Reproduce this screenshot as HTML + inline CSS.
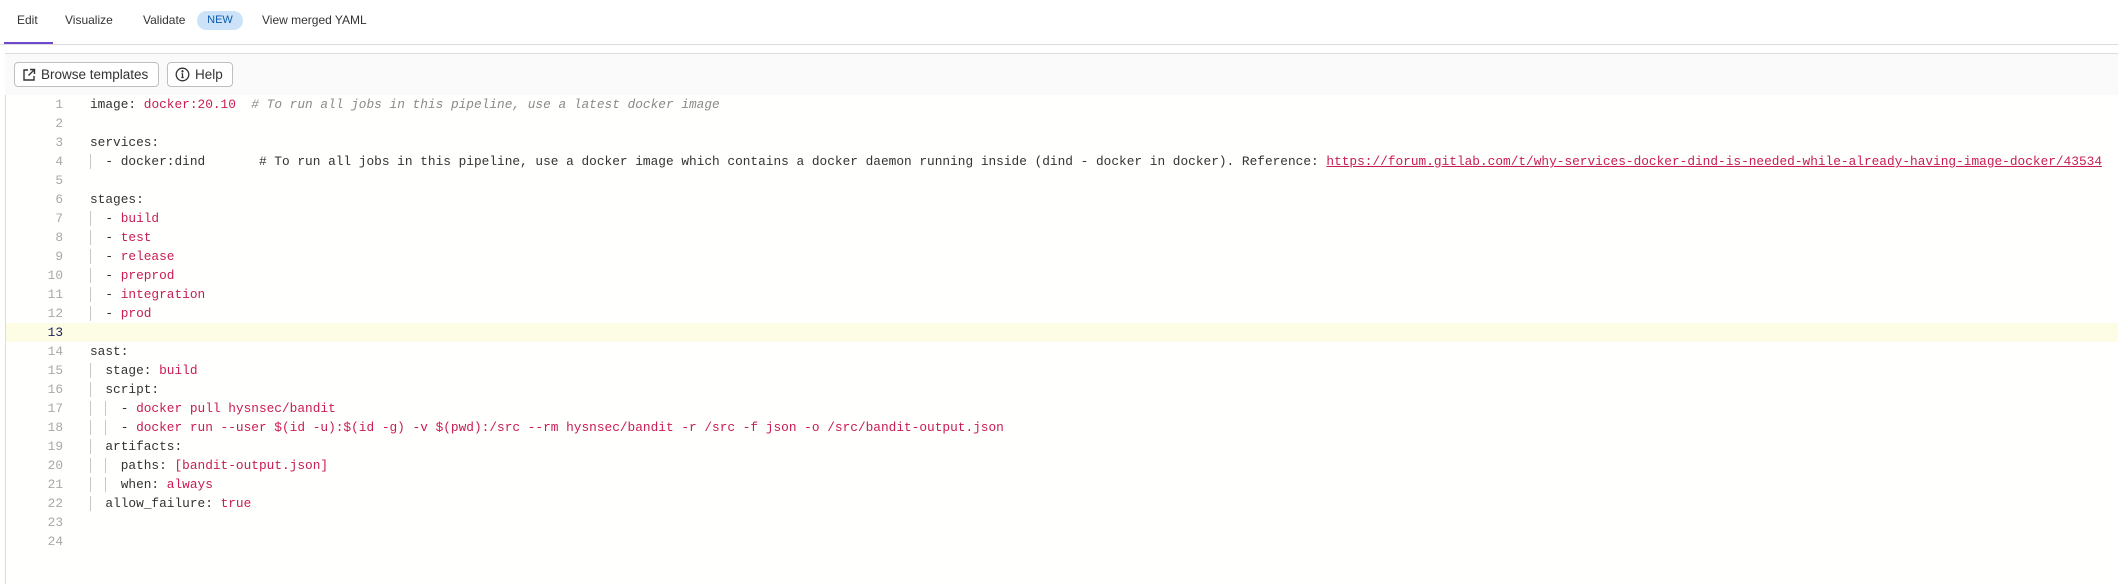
<!DOCTYPE html>
<html><head><meta charset="utf-8"><style>
body{margin:0;width:2118px;height:584px;background:#fff;overflow:hidden;font-family:"Liberation Sans",sans-serif;}
.tabs{position:absolute;left:0;top:0;width:2118px;height:44px;border-bottom:1px solid #dcdcde;}
.tab{position:absolute;top:13px;font-size:12px;color:#333;}
.ul{position:absolute;left:4px;top:42px;width:49px;height:2px;background:#6e49cb;}
.new{position:absolute;left:197px;top:11px;width:46px;height:19px;border-radius:10px;background:#cbe2f9;color:#0b5cad;font-size:11px;line-height:19px;text-align:center;}
.tb{position:absolute;left:5px;top:53px;width:2113px;height:41px;background:#fafafa;border-top:1px solid #dcdcde;border-bottom:1px solid #e5e5e5;}
.btn{position:absolute;top:8px;height:23px;border:1px solid #bfbfc3;border-radius:4px;background:#fff;font-size:13.5px;color:#333;line-height:23px;box-sizing:content-box;}
.ed{position:absolute;left:5px;top:95px;width:2113px;height:489px;background:#fffffd;border-left:1px solid #dcdcde;}
.ln{position:absolute;left:0;width:2113px;height:19px;font-family:"Liberation Mono",monospace;font-size:12.8px;line-height:19px;white-space:pre;color:#333;}
.n{position:absolute;right:2056px;color:#a8a8a8;text-align:right;width:40px;}
.c{position:absolute;left:84px;}
.v{color:#c91c52}.cm{color:#8a8a8a;font-style:italic}.cm2{color:#333}
.a{color:#c91c52;text-decoration:underline}
.g{box-shadow:inset 1px 0 #c8c8c8}
.cur{background:#fdfde6}
</style></head><body>
<div class="tabs">
<div class="tab" style="left:17px">Edit</div>
<div class="tab" style="left:65px">Visualize</div>
<div class="tab" style="left:143px">Validate</div>
<div class="new">NEW</div>
<div class="tab" style="left:262px">View merged YAML</div>
<div class="ul"></div>
</div>
<div class="tb">
<div class="btn" style="left:9px;width:143px"><svg style="position:absolute;left:7px;top:5px" width="14" height="14" viewBox="0 0 14 14" fill="none" stroke="#333" stroke-width="1.4"><path d="M6 2H2v10h10V8M8 1.5h4.5V6M12.5 1.5L6.5 7.5"/></svg><span style="position:absolute;left:26px">Browse templates</span></div>
<div class="btn" style="left:162px;width:64px"><svg style="position:absolute;left:7px;top:4px" width="15" height="15" viewBox="0 0 15 15" fill="none" stroke="#333" stroke-width="1.3"><circle cx="7.5" cy="7.5" r="6.3"/><path d="M7.5 6.5v4M6.3 10.5h2.4M6.5 6.5h1"/><circle cx="7.5" cy="4.3" r=".5" fill="#333"/></svg><span style="position:absolute;left:27px">Help</span></div>
</div>
<div class="ed">
<div class="ln" style="top:0"><span class="n">1</span><span class="c">image: <span class="v">docker:20.10</span>  <span class="cm"># To run all jobs in this pipeline, use a latest docker image</span></span></div>
<div class="ln" style="top:19px"><span class="n">2</span></div>
<div class="ln" style="top:38px"><span class="n">3</span><span class="c">services:</span></div>
<div class="ln" style="top:57px"><span class="n">4</span><span class="c"><span class="g">  </span>- docker:dind       <span class="cm2"># To run all jobs in this pipeline, use a docker image which contains a docker daemon running inside (dind - docker in docker). Reference: </span><span class="a">https://forum.gitlab.com/t/why-services-docker-dind-is-needed-while-already-having-image-docker/43534</span></span></div>
<div class="ln" style="top:76px"><span class="n">5</span></div>
<div class="ln" style="top:95px"><span class="n">6</span><span class="c">stages:</span></div>
<div class="ln" style="top:114px"><span class="n">7</span><span class="c"><span class="g">  </span>- <span class="v">build</span></span></div>
<div class="ln" style="top:133px"><span class="n">8</span><span class="c"><span class="g">  </span>- <span class="v">test</span></span></div>
<div class="ln" style="top:152px"><span class="n">9</span><span class="c"><span class="g">  </span>- <span class="v">release</span></span></div>
<div class="ln" style="top:171px"><span class="n">10</span><span class="c"><span class="g">  </span>- <span class="v">preprod</span></span></div>
<div class="ln" style="top:190px"><span class="n">11</span><span class="c"><span class="g">  </span>- <span class="v">integration</span></span></div>
<div class="ln" style="top:209px"><span class="n">12</span><span class="c"><span class="g">  </span>- <span class="v">prod</span></span></div>
<div class="ln cur" style="top:228px"><span class="n" style="color:#1f1f5c">13</span></div>
<div class="ln" style="top:247px"><span class="n">14</span><span class="c">sast:</span></div>
<div class="ln" style="top:266px"><span class="n">15</span><span class="c"><span class="g">  </span>stage: <span class="v">build</span></span></div>
<div class="ln" style="top:285px"><span class="n">16</span><span class="c"><span class="g">  </span>script:</span></div>
<div class="ln" style="top:304px"><span class="n">17</span><span class="c"><span class="g">  </span><span class="g">  </span>- <span class="v">docker pull hysnsec/bandit</span></span></div>
<div class="ln" style="top:323px"><span class="n">18</span><span class="c"><span class="g">  </span><span class="g">  </span>- <span class="v">docker run --user $(id -u):$(id -g) -v $(pwd):/src --rm hysnsec/bandit -r /src -f json -o /src/bandit-output.json</span></span></div>
<div class="ln" style="top:342px"><span class="n">19</span><span class="c"><span class="g">  </span>artifacts:</span></div>
<div class="ln" style="top:361px"><span class="n">20</span><span class="c"><span class="g">  </span><span class="g">  </span>paths: <span class="v">[bandit-output.json]</span></span></div>
<div class="ln" style="top:380px"><span class="n">21</span><span class="c"><span class="g">  </span><span class="g">  </span>when: <span class="v">always</span></span></div>
<div class="ln" style="top:399px"><span class="n">22</span><span class="c"><span class="g">  </span>allow_failure: <span class="v">true</span></span></div>
<div class="ln" style="top:418px"><span class="n">23</span></div>
<div class="ln" style="top:437px"><span class="n">24</span></div>
</div>
</body></html>
